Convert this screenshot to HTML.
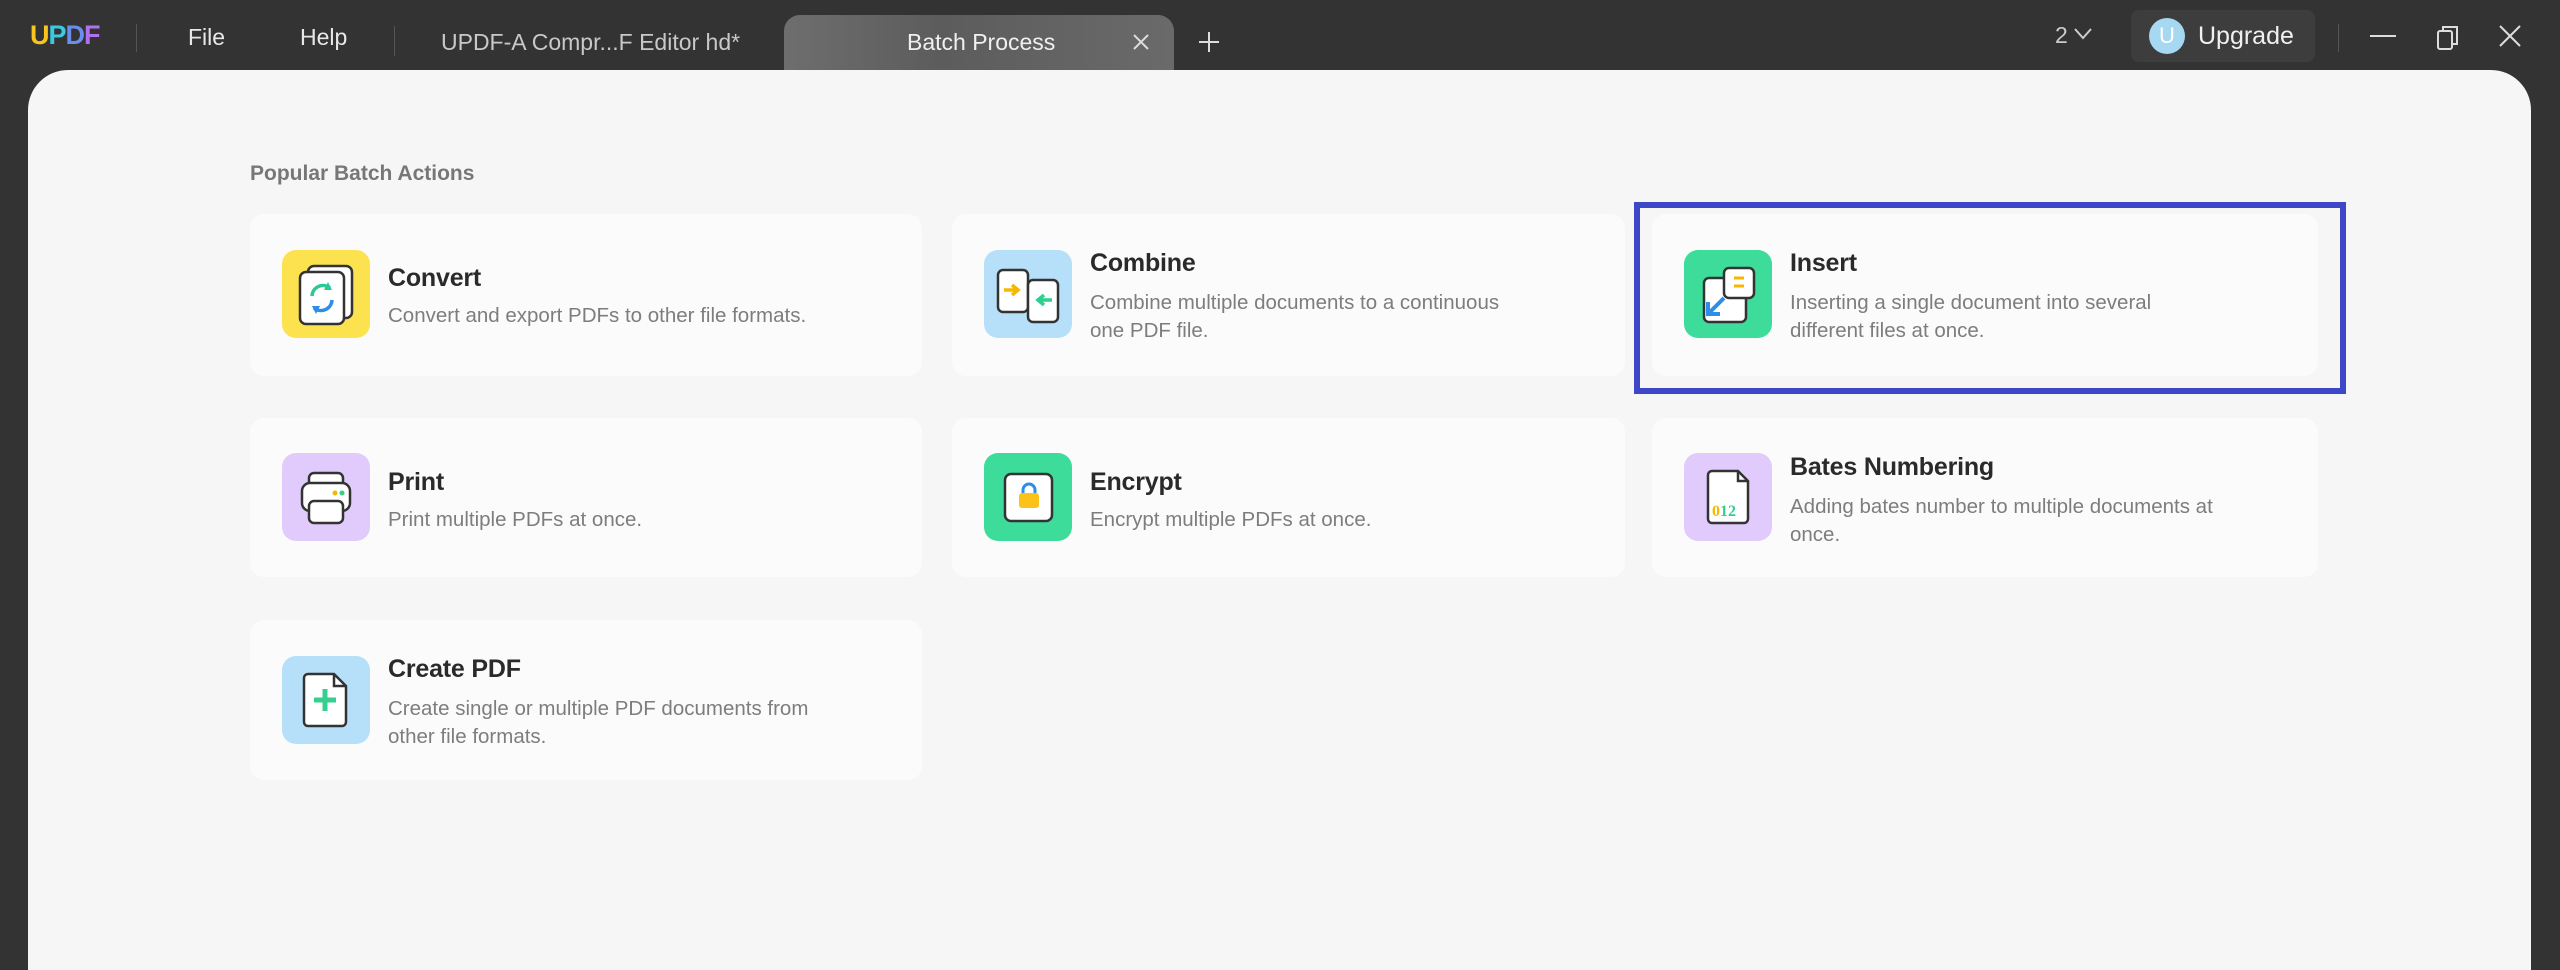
<!DOCTYPE html>
<html><head><meta charset="utf-8"><style>
*{box-sizing:border-box;margin:0;padding:0}
body{width:2560px;height:937px;background:#333333;font-family:"Liberation Sans",sans-serif;position:relative;overflow:hidden}
.abs{position:absolute}
.tb{color:#e8e8e8;font-size:23px;top:24px}
.panel{left:28px;top:70px;width:2503px;height:900px;background:#f6f6f7;border-radius:40px 40px 0 0}
.card{position:absolute;background:#fbfbfb;border-radius:14px}
.ic{position:absolute;left:32px;width:88px;height:88px;border-radius:14px}
.t{position:absolute;left:138px;font-size:25px;color:#2a2a2a;font-weight:bold;letter-spacing:-.2px}
.d{position:absolute;left:138px;font-size:20.5px;color:#7d7d7d;line-height:28px}
.sep{width:1px;height:28px;background:#555;top:24px}
</style></head><body>
<div class="abs" style="left:30px;top:20px;font-size:27px;font-weight:bold;letter-spacing:-1px"><span style="color:#f7c520">U</span><span style="color:#3cc8e0">P</span><span style="color:#6c8cf0">D</span><span style="color:#b070f0">F</span></div>
<div class="abs sep" style="left:136px"></div>
<div class="abs tb" style="left:188px">File</div>
<div class="abs tb" style="left:300px">Help</div>
<div class="abs sep" style="left:394px;top:26px;height:30px"></div>
<div class="abs tb" style="left:441px;top:29px;color:#c8c8c8">UPDF-A Compr...F Editor hd*</div>
<div class="abs" style="left:784px;top:15px;width:390px;height:56px;border-radius:16px 16px 0 0;background:linear-gradient(90deg,#6e6e6e,#5c5c5c 40%,#6a6a6a)"></div>
<div class="abs tb" style="left:907px;top:29px;color:#f0f0f0">Batch Process</div>
<svg class="abs" style="left:1132px;top:33px" width="18" height="18"><path d="M2 2L16 16M16 2L2 16" stroke="#ddd" stroke-width="2"/></svg>
<svg class="abs" style="left:1198px;top:31px" width="22" height="22"><path d="M11 1V21M1 11H21" stroke="#ddd" stroke-width="2"/></svg>
<div class="abs tb" style="left:2055px;top:22px;color:#ccc">2</div>
<svg class="abs" style="left:2074px;top:28px" width="18" height="12"><path d="M1 1L9 10L17 1" stroke="#ccc" stroke-width="2" fill="none"/></svg>
<div class="abs" style="left:2131px;top:10px;width:184px;height:52px;border-radius:8px;background:#3d3d3d"></div>
<div class="abs" style="left:2149px;top:18px;width:36px;height:36px;border-radius:50%;background:#a6d8f2;color:#fff;font-size:22px;text-align:center;line-height:36px">U</div>
<div class="abs tb" style="left:2198px;top:22px;font-size:25px;color:#f0f0f0">Upgrade</div>
<div class="abs sep" style="left:2338px"></div>
<svg class="abs" style="left:2368px;top:22px" width="30" height="30"><path d="M2 14H28" stroke="#ddd" stroke-width="2"/></svg>
<svg class="abs" style="left:2434px;top:22px" width="30" height="30"><rect x="4" y="9" width="14" height="18" rx="2" stroke="#ddd" stroke-width="2" fill="none"/><path d="M9 9V5H23V22H18" stroke="#ddd" stroke-width="2" fill="none"/></svg>
<svg class="abs" style="left:2498px;top:24px" width="24" height="24"><path d="M2 2L22 22M22 2L2 22" stroke="#ddd" stroke-width="2"/></svg>

<div class="abs panel"></div>
<div class="abs" style="left:250px;top:162px;font-size:21px;color:#777;font-weight:bold">Popular Batch Actions</div>

<!-- row1 -->
<div class="card" style="left:250px;top:214px;width:672px;height:162px">
 <div class="ic" style="top:36px;background:#fde24f"><svg width="88" height="88"><rect x="26" y="16" width="44" height="52" rx="6" fill="#fff" stroke="#333" stroke-width="2.5"/><rect x="18" y="22" width="44" height="52" rx="6" fill="#fff" stroke="#333" stroke-width="2.5"/><path d="M30 46a11 11 0 0 1 18-8" stroke="#2fc79a" stroke-width="3.5" fill="none"/><path d="M50 50a11 11 0 0 1-18 8" stroke="#2c8ee8" stroke-width="3.5" fill="none"/><path d="M46 32l4 8-8 0z" fill="#2fc79a"/><path d="M34 64l-4-8 8 0z" fill="#2c8ee8"/></svg></div>
 <div class="t" style="top:50px">Convert</div>
 <div class="d" style="top:88px">Convert and export PDFs to other file formats.</div>
</div>
<div class="card" style="left:952px;top:214px;width:673px;height:162px">
 <div class="ic" style="top:36px;background:#b6e0fa"><svg width="88" height="88"><rect x="14" y="20" width="30" height="42" rx="5" fill="#fff" stroke="#333" stroke-width="2.5"/><rect x="44" y="30" width="30" height="42" rx="5" fill="#fff" stroke="#333" stroke-width="2.5"/><path d="M20 40h12M28 35l6 5-6 5" stroke="#f5b800" stroke-width="3.5" fill="none"/><path d="M68 50h-12M60 45l-6 5 6 5" stroke="#2fcf8e" stroke-width="3.5" fill="none"/></svg></div>
 <div class="t" style="top:35px">Combine</div>
 <div class="d" style="top:75px">Combine multiple documents to a continuous<br>one PDF file.</div>
</div>
<div class="card" style="left:1652px;top:214px;width:666px;height:162px">
 <div class="ic" style="top:36px;background:#3ddc9a"><svg width="88" height="88"><rect x="20" y="28" width="42" height="44" rx="5" fill="#fff" stroke="#333" stroke-width="2.5"/><rect x="40" y="18" width="30" height="30" rx="5" fill="#fff" stroke="#333" stroke-width="2.5"/><path d="M50 28h10M50 36h10" stroke="#f5b800" stroke-width="3"/><path d="M40 48L26 62M24 52v12h12" stroke="#2c8ee8" stroke-width="4" fill="none"/></svg></div>
 <div class="t" style="top:35px">Insert</div>
 <div class="d" style="top:75px">Inserting a single document into several<br>different files at once.</div>
</div>
<div class="abs" style="left:1634px;top:202px;width:712px;height:192px;border:6px solid #3e47c8"></div>

<!-- row2 -->
<div class="card" style="left:250px;top:418px;width:672px;height:159px">
 <div class="ic" style="top:35px;background:#e1cbfc"><svg width="88" height="88"><rect x="27" y="20" width="34" height="16" rx="5" fill="#fff" stroke="#333" stroke-width="2.5"/><rect x="20" y="30" width="48" height="28" rx="8" fill="#fff" stroke="#333" stroke-width="2.5"/><rect x="27" y="48" width="34" height="22" rx="5" fill="#fff" stroke="#333" stroke-width="2.5"/><circle cx="53" cy="40" r="2.5" fill="#f5b800"/><circle cx="60" cy="40" r="2.5" fill="#2fcf8e"/></svg></div>
 <div class="t" style="top:50px">Print</div>
 <div class="d" style="top:88px">Print multiple PDFs at once.</div>
</div>
<div class="card" style="left:952px;top:418px;width:673px;height:159px">
 <div class="ic" style="top:35px;background:#3ddc9a"><svg width="88" height="88"><rect x="21" y="21" width="47" height="47" rx="6" fill="#fff" stroke="#333" stroke-width="2.5"/><path d="M39 41v-4a6 6 0 0 1 12 0v4" stroke="#2c8ee8" stroke-width="3" fill="none"/><rect x="35" y="40" width="20" height="15" rx="3" fill="#fbc21a"/></svg></div>
 <div class="t" style="top:50px">Encrypt</div>
 <div class="d" style="top:88px">Encrypt multiple PDFs at once.</div>
</div>
<div class="card" style="left:1652px;top:418px;width:666px;height:159px">
 <div class="ic" style="top:35px;background:#e1cbfc"><svg width="88" height="88"><path d="M28 18h26l10 10v38a4 4 0 0 1-4 4H28a4 4 0 0 1-4-4V22a4 4 0 0 1 4-4z" fill="#fff" stroke="#333" stroke-width="2.5"/><path d="M54 18v10h10" fill="none" stroke="#333" stroke-width="2.5"/><text x="28" y="63" font-family="Liberation Serif,serif" font-weight="bold" font-size="16" fill="#f5b800">0<tspan fill="#2fcf8e">12</tspan></text></svg></div>
 <div class="t" style="top:35px">Bates Numbering</div>
 <div class="d" style="top:75px">Adding bates number to multiple documents at<br>once.</div>
</div>

<!-- row3 -->
<div class="card" style="left:250px;top:620px;width:672px;height:160px">
 <div class="ic" style="top:36px;background:#b6e0fa"><svg width="88" height="88"><path d="M26 18h26l12 12v36a4 4 0 0 1-4 4H26a4 4 0 0 1-4-4V22a4 4 0 0 1 4-4z" fill="#fff" stroke="#333" stroke-width="2.5"/><path d="M52 18v12h12" fill="none" stroke="#333" stroke-width="2.5"/><path d="M43 33v22M32 44h22" stroke="#35d08f" stroke-width="5"/></svg></div>
 <div class="t" style="top:35px">Create PDF</div>
 <div class="d" style="top:75px">Create single or multiple PDF documents from<br>other file formats.</div>
</div>
</body></html>
